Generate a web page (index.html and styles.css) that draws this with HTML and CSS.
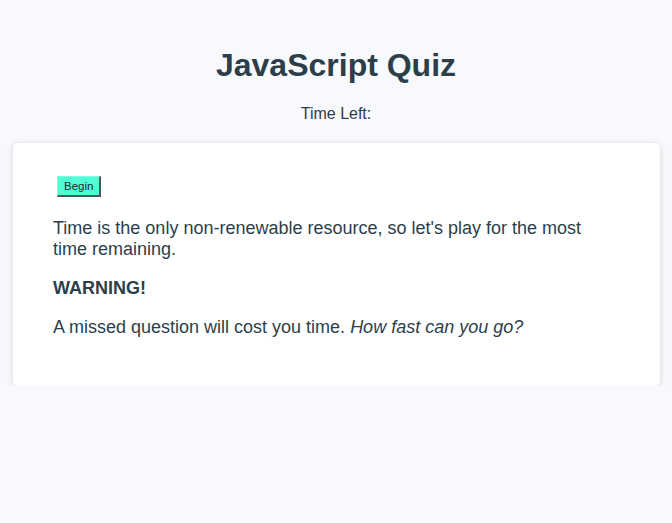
FILE: index.html
```html
<!DOCTYPE html>
<html lang="en">
<head>
<meta charset="UTF-8">
<meta name="viewport" content="width=device-width, initial-scale=1.0">
<title>JavaScript Quiz</title>
<link rel="stylesheet" href="styles.css">
</head>
<body>
  <header class="header">
    <h1>JavaScript Quiz</h1>
    <p class="timer">Time Left: <span id="time"></span></p>
  </header>

  <div class="card" id="quiz">
    <div class="controls">
      <button id="start" type="button">Begin</button>
    </div>
    <p>Time is the only non-renewable resource, so let's play for the most time remaining.</p>
    <p class="warning">WARNING!</p>
    <p>A missed question will cost you time. <em>How fast can you go?</em></p>
  </div>
</body>
</html>
```

FILE: styles.css
```css
body {
  font-family: "Liberation Sans", Arial, sans-serif;
  background: #f7f9fc;
  color: #2d3e4b;
  margin: 0;
  padding: 0;
}

.header {
  text-align: center;
  padding-top: 47px;
}

.header h1 {
  font-size: 32px;
  margin: 0;
}

.timer {
  font-size: 16px;
  margin: 21px 0 20px;
}

/* Quiz card */
.card {
  background: #fff;
  margin: 0 12px 0 13px;
  padding: 33px 40px 48px;
  border-radius: 5px;
  box-shadow: 0 1px 6px rgba(0, 0, 0, 0.15);
}

.controls {
  margin-bottom: 21px;
}

#start {
  font-family: "Liberation Sans", Arial, sans-serif;
  font-size: 11.5px;
  color: #1d2a33;
  background: #4fffd3;
  border-style: solid;
  border-width: 1px 2px 2px 1px;
  border-color: #7fffe0 #555 #555 #7fffe0;
  padding: 3px 6px 3px 6px;
  margin-left: 4px;
  cursor: pointer;
}

.card p {
  font-size: 18px;
  line-height: 21px;
  margin: 0 0 18px;
}

.card p:last-child {
  margin-bottom: 0;
}

.card .warning {
  font-weight: bold;
}
```
